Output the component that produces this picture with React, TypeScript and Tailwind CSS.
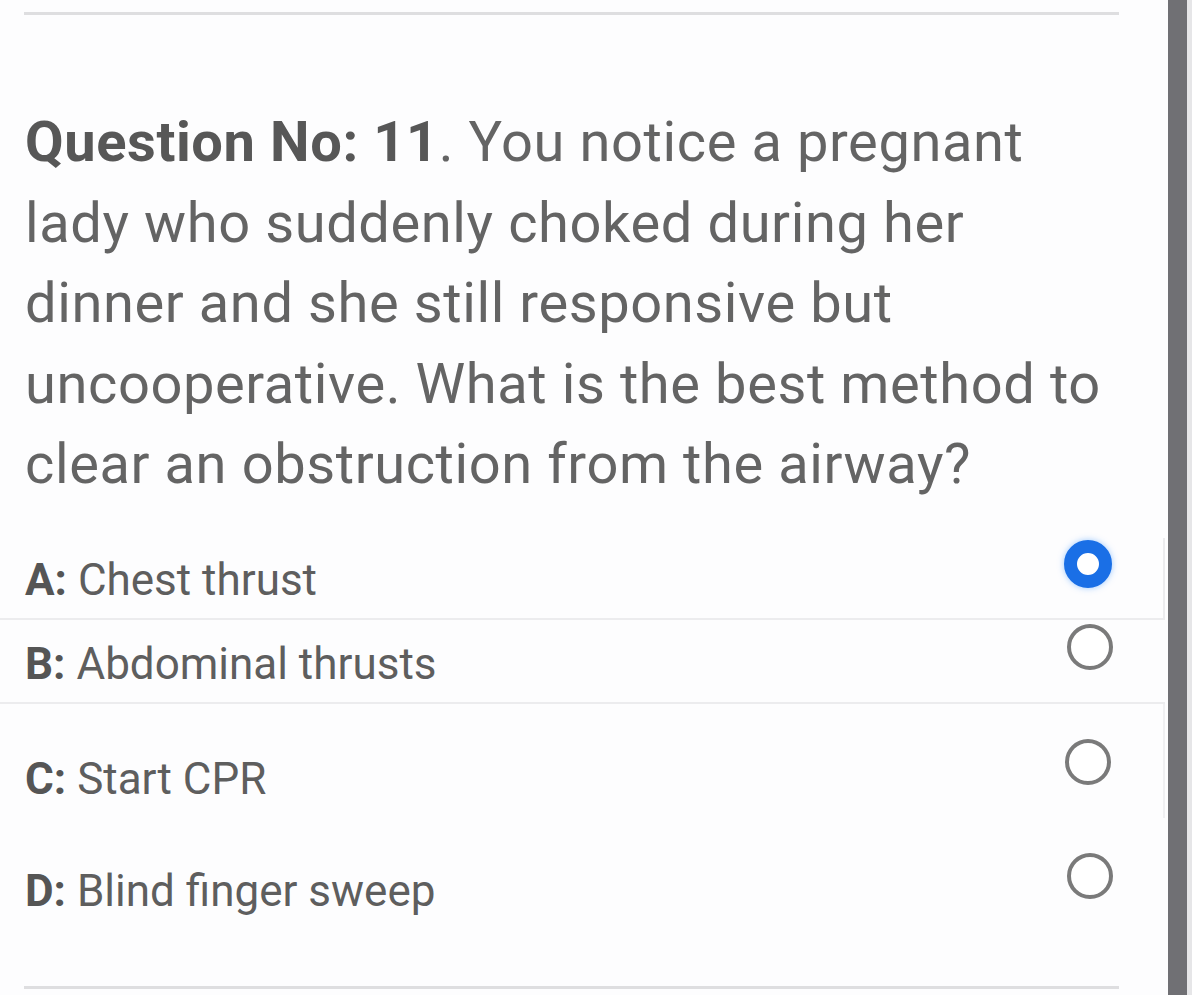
import React from "react";

const options = [
  { key: "A", text: "Chest thrust", selected: true },
  { key: "B", text: "Abdominal thrusts", selected: false },
  { key: "C", text: "Start CPR", selected: false },
  { key: "D", text: "Blind finger sweep", selected: false },
];

function Radio({ selected }: { selected: boolean }) {
  if (selected) {
    return (
      <div className="w-[48px] h-[48px] rounded-full border-[13px] border-[#1a6fe6] bg-white shadow-[0_0_6px_rgba(60,150,255,0.5)]" />
    );
  }
  return <div className="w-[46px] h-[46px] rounded-full border-[4px] border-[#7a7a7a] bg-white" />;
}

function OptionText({ k, text, pt }: { k: string; text: string; pt: string }) {
  return (
    <div className={`${pt} text-[44px] leading-[52px] text-[#5e5e5e]`}>
      <span className="font-bold text-[#555]">{k}:</span> {text}
    </div>
  );
}

export default function App() {
  return (
    <div className="flex w-[1192px] h-[995px] bg-[#fdfdfe] overflow-hidden" style={{ fontFamily: "Roboto, 'Liberation Sans', sans-serif" }}>
      <div className="flex-1 flex flex-col">
        <div className="mt-[12px] ml-[24px] mr-[49px] h-[3px] bg-[#dedee0]" />

        {/* Question */}
        <p className="mt-[87px] ml-[25px] mr-[48px] text-[56px] leading-[80.5px] tracking-[0.6px] text-[#646464]">
          <span className="font-bold text-[#575757]">Question No: 11</span>. You notice a pregnant lady who suddenly
          choked during her dinner and she still responsive but uncooperative. What is the best method to clear an
          obstruction from the airway?
        </p>

        {/* Options */}
        <div className="mt-[33px] flex flex-col">
          <div className="mr-[3px] h-[82px] flex justify-between pl-[25px] pr-[51px] border-b-2 border-r-2 border-[#ececee]">
            <OptionText k={options[0].key} text={options[0].text} pt="pt-[16px]" />
            <div className="mt-[2px]"><Radio selected /></div>
          </div>
          <div className="mr-[3px] h-[84px] flex justify-between pl-[25px] pr-[52px] border-b-2 border-[#ececee]">
            <OptionText k={options[1].key} text={options[1].text} pt="pt-[18px]" />
            <div className="mt-[4px]"><Radio selected={false} /></div>
          </div>
          <div className="mr-[3px] h-[114px] flex justify-between pl-[25px] pr-[52px] border-r-2 border-[#f0f0f2]">
            <OptionText k={options[2].key} text={options[2].text} pt="pt-[49px]" />
            <div className="mt-[35px]"><Radio selected={false} /></div>
          </div>
          <div className="mr-[3px] h-[114px] flex justify-between pl-[25px] pr-[52px]">
            <OptionText k={options[3].key} text={options[3].text} pt="pt-[47px]" />
            <div className="mt-[35px]"><Radio selected={false} /></div>
          </div>
        </div>

        <div className="mt-[54px] ml-[24px] mr-[49px] h-[3px] bg-[#dedee0]" />
      </div>

      {/* scrollbar */}
      <div className="w-[19px] h-full bg-[#707074]" />
      <div className="w-[5px] h-full bg-[#e6e6e8]" />
    </div>
  );
}
